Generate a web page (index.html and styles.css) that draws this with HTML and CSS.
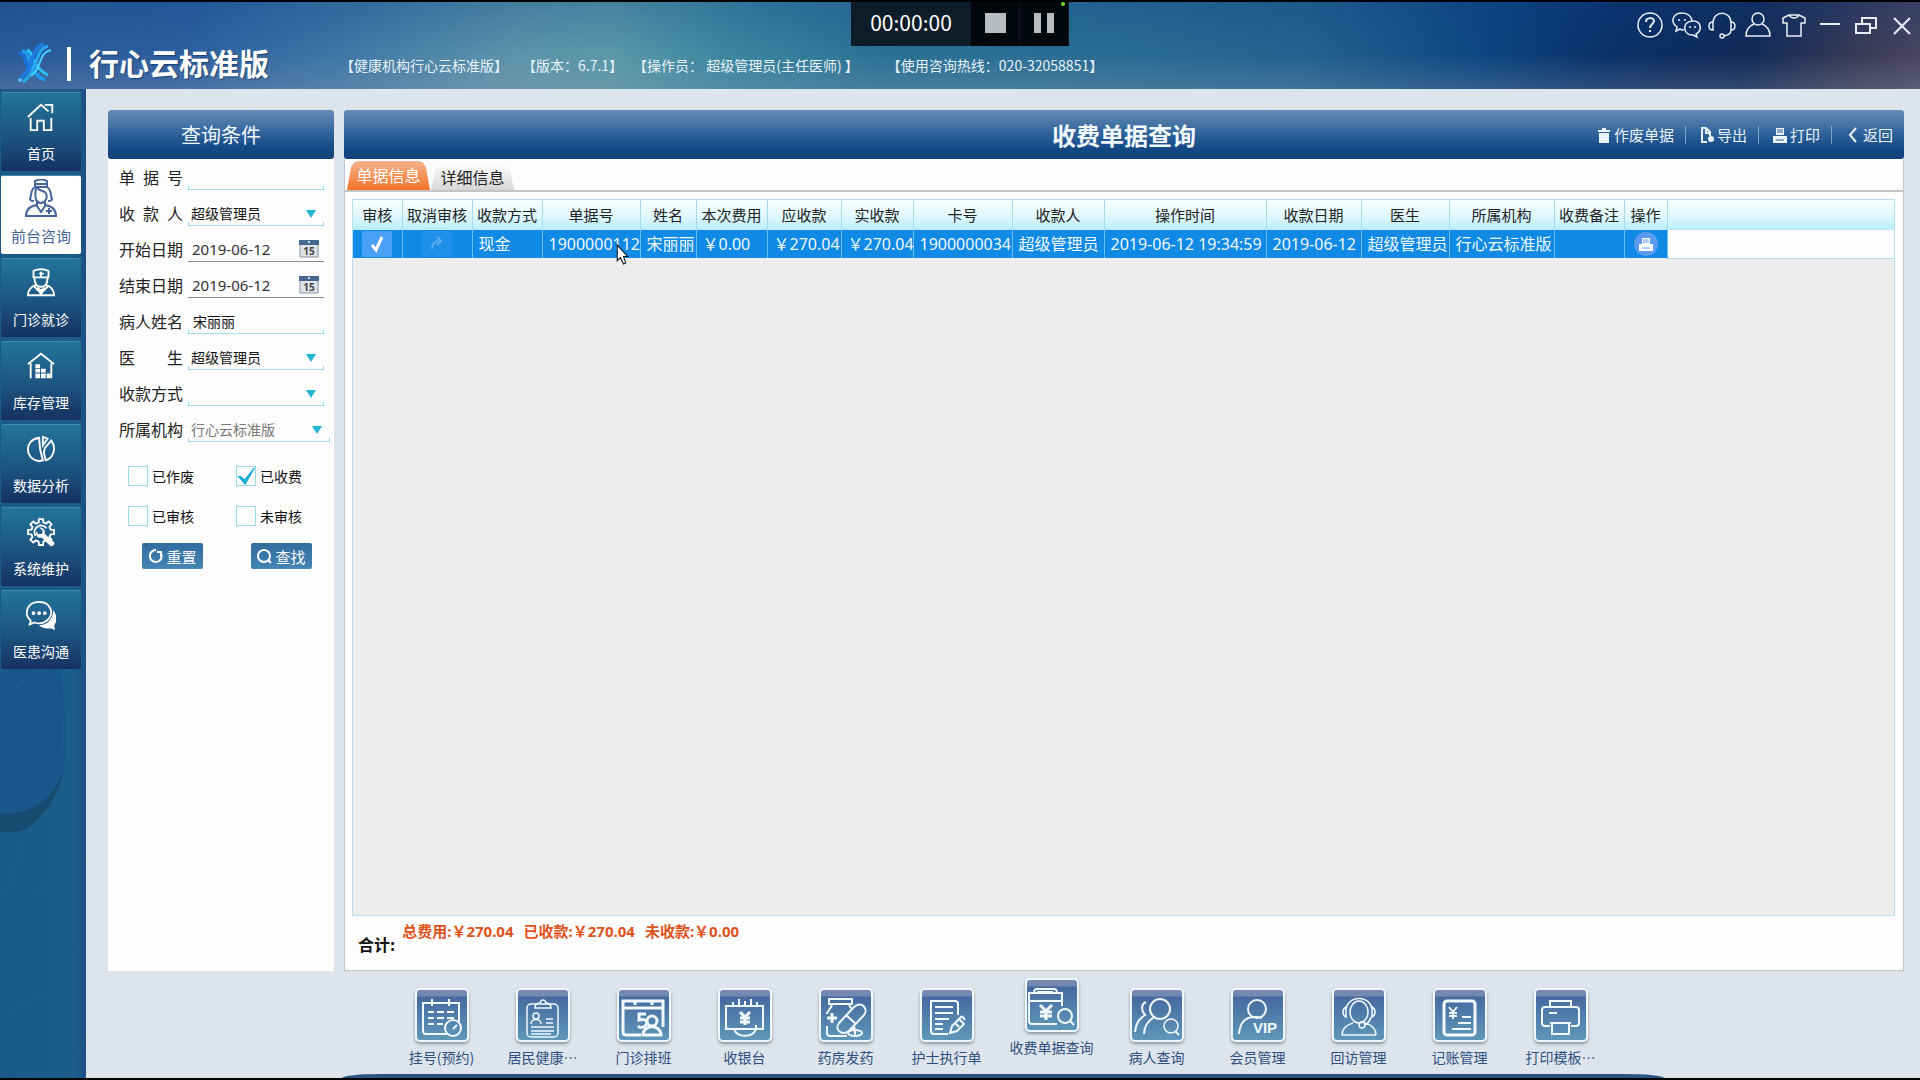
FILE: index.html
```html
<!DOCTYPE html>
<html lang="zh-CN">
<head>
    <meta charset="UTF-8">
    <meta name="viewport" content="width=device-width, initial-scale=1.0">
    <title>收费单据查询</title>
    <link rel="stylesheet" href="styles.css">
</head>
<body>
    <header class="topbar">
        <svg class="logo" viewBox="0 0 36 42" fill="none">
            <path d="M2 11c7 1 6 7 9 13 1 2 2 3 4 4" stroke="#1b6fd6" stroke-width="3"/>
            <path d="M6 9c7 1 6 8 9 14s6 12 14 15" stroke="#1f97ea" stroke-width="4"/>
            <path d="M11 8c6 2 5 8 8 13s6 9 13 12" stroke="#2cc0f8" stroke-width="3"/>
            <path d="M28 2c-9 3-9 9-12 16S12 32 4 36" stroke="#1c7be0" stroke-width="4"/>
            <path d="M32 4c-9 3-9 9-12 16S15 34 7 40" stroke="#27a9f2" stroke-width="3"/>
            <path d="M35 8c-8 2-9 7-11 12-2 6-5 11-9 14" stroke="#45d0fc" stroke-width="2"/>
            <circle cx="4" cy="38" r="2" fill="#4fb4f5"/>
        </svg>
        <span class="divider"></span>
        <h1 class="brand">行心云标准版</h1>
        <div class="info">
            <span>【健康机构行心云标准版】</span>
            <span class="info-version">【版本：6.7.1】</span>
            <span class="info-user">【操作员： 超级管理员(主任医师) 】</span>
            <span class="info-phone">【使用咨询热线：020-32058851】</span>
        </div>
        <div class="window-tools">
            <button aria-label="帮助"><svg viewBox="0 0 30 30"><circle cx="15" cy="15" r="12"/><path class="bold" d="M11 12c0-5 8-5 8-1 0 3-4 3-4 7M15 20v2"/></svg></button>
            <button aria-label="微信"><svg viewBox="0 0 30 30"><path d="M13 20c-2 0-3 0-4-1l-4 2 1-4C-2 11 3 3 11 3c6 0 10 4 10 8"/><path d="M22 11c9 0 9 10 3 13l1 3-4-2c-10 1-12-14 0-14z"/><path d="M8 9v2M14 9v2M19 16v2M24 16v2"/></svg></button>
            <button aria-label="客服"><svg viewBox="0 0 30 30"><path d="M6 13C6 0 24 0 24 13M6 12c-3 0-4 2-4 4s1 4 4 4zM24 12c3 0 4 2 4 4s-1 4-4 4zM24 20c0 4-3 5-7 6"/><circle cx="15" cy="26" r="2"/></svg></button>
            <button aria-label="用户"><svg viewBox="0 0 30 30"><circle cx="15" cy="9" r="6"/><path d="M11 14c-5 2-8 6-8 12h24c0-6-3-10-8-12"/></svg></button>
            <button aria-label="换肤"><svg viewBox="0 0 30 30"><path d="M10 5L4 8v5h4v13h14V13h4V8l-6-3c-2 4-8 4-10 0zM10 5h10"/></svg></button>
            <button aria-label="最小化"><svg class="bold" viewBox="0 0 30 30"><path d="M5 14h20"/></svg></button>
            <button aria-label="还原"><svg class="bold" viewBox="0 0 30 30"><path d="M5 14h14v9H5zM11 14V8h14v10h-6"/></svg></button>
            <button aria-label="关闭"><svg class="bold" viewBox="0 0 30 30"><path d="M7 8l16 16M23 8L7 24"/></svg></button>
        </div>
        <div class="recorder">
            <span class="recorder-time">00:00:00</span>
            <button aria-label="停止"><svg viewBox="0 0 48 44"><path d="M14 11h21v20H14z"/></svg></button>
            <button aria-label="暂停"><svg viewBox="0 0 48 44"><path d="M14 11h7v20h-7zM27 11h7v20h-7z"/></svg></button>
            <i class="recorder-dot"></i>
        </div>
    </header>

    <div class="layout">
        <aside class="sidebar">
            <nav class="menu">
                <a href="#"><svg viewBox="0 0 32 32"><path d="M2 16L16 3l8 7M20 3h8v9M5 17v13h7V20h7v10h8V17"/></svg>首页</a>
                <a href="#" class="active"><svg viewBox="0 0 32 38"><path d="M10 8V2c4-2 8-2 12 0v6M10 5h12M9 22c-3 0-4-1-4-2 2-4 0-9 5-12h12c5 3 3 8 5 12 0 1-1 2-4 2M11 9c-2 12 1 15 5 15s8-6 4-11c-4-1-6-2-8-4M12 23v4l4 6 4-6v-4M12 26c-7 1-11 4-11 11h30c0-7-4-10-11-11M21 32h6M24 29v6"/></svg>前台咨询</a>
                <a href="#"><svg viewBox="0 0 32 32"><path d="M8 10V3c5-2 11-2 16 0v7zM16 4v5M14 6h5M9 10c0 8 3 10 7 10s7-2 7-10M11 18c-6 2-9 5-9 11h28c0-6-3-9-9-11M9 20l8 8M23 20l-8 8M12 21l4 3 4-3"/></svg>门诊就诊</a>
                <a href="#"><svg viewBox="0 0 32 32"><path d="M2 14L16 3l14 11M5 13v16M27 13v16"/><path class="solid" d="M10 14h5v4h-5zM10 19h5v4h-5zM16 19h5v4h-5zM10 24h5v5h-5zM16 24h5v5h-5zM22 24h4v5h-4z"/></svg>库存管理</a>
                <a href="#"><svg viewBox="0 0 32 32"><path d="M14 4C-2 6-2 27 14 29l4-1-3-12zM20 15l7-8c6 8 2 19-6 21l-2-8zM18 3v9l5-7z"/></svg>数据分析</a>
                <a href="#"><svg viewBox="0 0 32 32"><path d="M13.5 5.8L13.8 2.2h4.4l.3 3.6L21.4 7l2.8-2.3 3.1 3.1L25 10.6l1.2 2.9 3.6.3v4.4l-3.6.3L25 21.4l2.3 2.8-3.1 3.1-2.8-2.3-2.9 1.2-.3 3.6h-4.4l-.3-3.6L10.6 25l-2.8 2.3-3.1-3.1L7 21.4l-1.2-2.9-3.6-.3v-4.4l3.6-.3L7 10.6 4.7 7.8l3.1-3.1L10.6 7z"/><path d="M22 12C16 5 6 12 10 20"/><path class="solid" d="M14 11l4 4-1 3h-4l-2-3c-1 6 2 8 6 7l9 9c3 1 5-2 4-4l-10-9c1-4-2-7-6-7z"/></svg>系统维护</a>
                <a href="#"><svg viewBox="0 0 32 32"><path class="solid" d="M29 11c5 6 4 13 1 16l1 5-5-2c-5 1-9 0-12-3 8 0 15-6 15-16z"/><path d="M5 22C-3 15 1 2 14 2s17 14 8 20c-4 3-8 4-13 2l-5 2z"/><path class="dots" d="M8 14h0M14 14h0M20 14h0"/></svg>医患沟通</a>
            </nav>
            <svg class="sidebar-art" viewBox="0 0 86 406" preserveAspectRatio="xMinYMin slice">
                <path d="M60 0c6 40 8 90 1 112-14 32-35 40-61 38V0z" fill="#18568b"/>
                <path d="M63 86c0 18-5 30-13 38-14 15-28 20-50 19v18c16 3 28 0 38-13 14-12 24-32 25-62z" fill="#184b70"/>
                <path d="M40 0c24 24 27 58 20 95M0 32L38 0" stroke="#235f8c" fill="none"/>
                <path d="M86 190c-20 20-30 22-50 30M26 170L0 230M80 270c-10 60-50 50-80 80M86 360l-16 46" stroke="#235f8b" fill="none"/>
            </svg>
        </aside>

        <main class="content">
            <div class="panels">
                <section class="search-panel">
                    <h2 class="panel-title">查询条件</h2>
                    <form class="search-form">
                        <div class="row"><label for="billNo">单据号</label><div class="field"><input id="billNo" type="text"></div></div>
                        <div class="row"><label for="payee">收款人</label><div class="field drop"><select id="payee"><option>超级管理员</option></select></div></div>
                        <div class="row"><label for="startDate">开始日期</label><div class="field date"><input id="startDate" type="text" value="2019-06-12"><svg viewBox="0 0 20 20"><path fill="#dde2e8" stroke="#8a94a3" d="M1 2h18v16H1z"/><path fill="#46678f" d="M0 1h20v5H0z"/><circle cx="10" cy="3" r="1" fill="#fff"/><text x="10" y="16">15</text></svg></div></div>
                        <div class="row"><label for="endDate">结束日期</label><div class="field date"><input id="endDate" type="text" value="2019-06-12"><svg viewBox="0 0 20 20"><path fill="#dde2e8" stroke="#8a94a3" d="M1 2h18v16H1z"/><path fill="#46678f" d="M0 1h20v5H0z"/><circle cx="10" cy="3" r="1" fill="#fff"/><text x="10" y="16">15</text></svg></div></div>
                        <div class="row"><label for="patient">病人姓名</label><div class="field"><input id="patient" type="text" value="宋丽丽"></div></div>
                        <div class="row"><label for="doctor">医生</label><div class="field drop"><select id="doctor"><option>超级管理员</option></select></div></div>
                        <div class="row"><label for="payType">收款方式</label><div class="field drop"><select id="payType"><option></option></select></div></div>
                        <div class="row wide"><label for="org">所属机构</label><div class="field drop muted"><select id="org"><option>行心云标准版</option></select></div></div>
                        <div class="checks">
                            <label><input type="checkbox">已作废</label>
                            <label><input type="checkbox" checked>已收费</label>
                            <label><input type="checkbox">已审核</label>
                            <label><input type="checkbox">未审核</label>
                        </div>
                        <div class="actions">
                            <button type="reset"><svg viewBox="0 0 16 16"><path d="M8 2a6 6 0 1 0 5 3M13 9V4H9"/></svg>重置</button>
                            <button type="button"><svg viewBox="0 0 16 16"><circle cx="7" cy="8" r="6"/><path d="M11 12l3 3"/></svg>查找</button>
                        </div>
                    </form>
                </section>

                <section class="bill-panel">
                    <div class="bill-title">
                        <h2>收费单据查询</h2>
                        <div class="tools">
                            <button><svg viewBox="0 0 14 18"><path d="M1 4h12v2H1zM5 2h4v2H5zM2 7h10v10H2z"/></svg>作废单据</button>
                            <button><svg class="line" viewBox="0 0 14 18"><path d="M7 16H2V2h4l4 4v4M6 2v5h4"/><circle class="dot" cx="11" cy="13" r="3"/></svg>导出</button>
                            <button><svg viewBox="0 0 14 18"><path d="M3 2h8v7H3zM0 10h14v7H0z"/><path d="M4 4h6M4 6h6M3 14h8" stroke="#2a5c94"/></svg>打印</button>
                            <button><svg class="line" viewBox="0 0 14 18"><path d="M10 2L4 9l6 7"/></svg>返回</button>
                        </div>
                    </div>
                    <div class="bill-body">
                        <div class="tabs">
                            <button class="tab active">单据信息</button>
                            <button class="tab">详细信息</button>
                        </div>
                        <div class="grid">
                            <table>
                                <colgroup>
                                    <col class="w49"><col class="w70"><col class="w70"><col class="w98"><col class="w56"><col class="w71"><col class="w74"><col class="w72"><col class="w99"><col class="w92"><col class="w162"><col class="w95"><col class="w88"><col class="w105"><col class="w70"><col class="w43"><col>
                                </colgroup>
                                <thead>
                                    <tr>
                                        <th>审核</th><th>取消审核</th><th>收款方式</th><th>单据号</th><th>姓名</th><th>本次费用</th><th>应收款</th><th>实收款</th><th>卡号</th><th>收款人</th><th>操作时间</th><th>收款日期</th><th>医生</th><th>所属机构</th><th>收费备注</th><th>操作</th><th></th>
                                    </tr>
                                </thead>
                                <tbody>
                                    <tr>
                                        <td class="op"><button class="check" aria-label="审核"><svg viewBox="0 0 30 26"><path d="M10 14l4 5 6-13" fill="none" stroke="#fff" stroke-width="3"/></svg></button></td>
                                        <td class="op"><button class="undo" aria-label="取消审核"><svg viewBox="0 0 30 26"><path d="M10 18c0-6 3-8 8-8M15 6l4 4-4 4" fill="none" stroke="#5cabef" stroke-width="2"/></svg></button></td>
                                        <td>现金</td>
                                        <td>1900000112</td>
                                        <td>宋丽丽</td>
                                        <td>￥0.00</td>
                                        <td>￥270.04</td>
                                        <td>￥270.04</td>
                                        <td>1900000034</td>
                                        <td>超级管理员</td>
                                        <td>2019-06-12 19:34:59</td>
                                        <td>2019-06-12</td>
                                        <td>超级管理员</td>
                                        <td>行心云标准版</td>
                                        <td></td>
                                        <td class="op"><button class="print" aria-label="打印"><svg viewBox="0 0 24 24"><path d="M8 6h8v6H8zM5 12h14v7H5z" fill="#fff"/><path d="M9 8h6M9 10h6M8 16h8" stroke="#5b9cf0"/></svg></button></td>
                                        <td class="blank"></td>
                                    </tr>
                                </tbody>
                            </table>
                        </div>
                        <div class="total">
                            <strong>合计:</strong>
                            <p><span>总费用:￥270.04</span><span>已收款:￥270.04</span><span>未收款:￥0.00</span></p>
                        </div>
                    </div>
                </section>
            </div>

            <nav class="dock">
                <a href="#"><svg viewBox="0 0 50 50"><path d="M30 44H9c-2 0-3-1-3-3V13h36v19M15 9v7M32 9v7"/><path d="M11 22h6M20 22h7M30 22h7M11 28h6M20 28h7M30 28h7M11 34h6M20 34h6"/><circle cx="36" cy="38" r="8"/><path d="M36 39l4-4"/></svg>挂号(预约)</a>
                <a href="#"><svg class="thin" viewBox="0 0 50 50"><rect x="9" y="14" width="31" height="33" rx="4"/><path d="M17 18c0-4 2-5 5-5 1-4 5-4 6 0 3 0 5 1 5 5z"/><circle cx="18" cy="26" r="3"/><path d="M13 34c0-6 10-6 10 0M28 29h7M28 33h7M13 37h23M13 41h23M13 44h20"/></svg>居民健康…</a>
                <a href="#"><svg class="thick" viewBox="0 0 50 50"><path d="M22 45H7c-2 0-3-1-3-3V11h40v26M4 18h40M16 11v4M33 11v4"/><path d="M27 24h-7v6c7-2 9 2 7 5s-6 3-8 1"/><circle cx="33" cy="31" r="5"/><path d="M24 45c0-11 18-11 18 0z"/></svg>门诊排班</a>
                <a href="#"><svg viewBox="0 0 50 50"><path d="M6 16h37v23H6zM13 16v-4M19 16V9M25 16v-5M31 16V9M37 16v-4M14 39c3 9 19 9 22 0v-4"/><path class="heavy" d="M20 22l5 5 5-5M25 27v8M20 28h10M20 32h10"/></svg>收银台</a>
                <a href="#"><svg viewBox="0 0 50 50"><path d="M8 9h23v5H8zM11 14c0 5-5 6-5 10M28 14c0 2 2 4 3 5M6 36v7c0 2 1 3 3 3h17"/><path class="heavy" d="M6 28h10M11 23v10"/><path d="M18 33l15-16c7-6 15 1 10 8L28 41c-7 5-15-1-10-8zM25 25l10 9M34 37l-2 3"/><ellipse cx="34" cy="43" rx="7" ry="3"/><path d="M34 40v6"/></svg>药房发药</a>
                <a href="#"><svg viewBox="0 0 50 50"><path d="M26 44H12c-2 0-3-1-3-3V11h24c2 0 3 1 3 3v11M13 17h18M13 23h18M13 29h14M13 34h8M13 39h8"/><path d="M28 43l2-7 7-7 5 5-7 7zM37 29l3-3M40 26l3 4M33 33l4 4"/></svg>护士执行单</a>
                <a href="#" class="active"><svg viewBox="0 0 50 50"><path d="M30 44H5c-2 0-3-1-3-3V13h33v13M2 21h33M7 13c0-3 1-4 3-4h17c2 0 3 1 3 4M10 12h16"/><path class="heavy" d="M13 25l6 6 6-6M19 31v9M13 32h12M13 36h12"/><circle cx="38" cy="36" r="7"/><path d="M43 41l4 4"/></svg>收费单据查询</a>
                <a href="#"><svg viewBox="0 0 50 50"><circle cx="28" cy="19" r="10"/><path d="M12 44c0-8 4-13 10-17M14 12c-5 2-5 9-1 13-6 4-9 8-10 17"/><circle class="fine" cx="39" cy="36" r="7"/><path d="M43 41l4 4"/></svg>病人查询</a>
                <a href="#"><svg viewBox="0 0 50 50"><circle cx="24" cy="19" r="9"/><path d="M6 44c1-12 7-18 18-17 2 0 3 0 5 1"/><text x="32" y="43">VIP</text></svg>会员管理</a>
                <a href="#"><svg class="thin" viewBox="0 0 50 50"><ellipse cx="25" cy="22" rx="9" ry="11"/><path d="M12 22C11 4 39 4 38 22M12 17c-4 2-4 8 0 10zM38 17c4 2 4 8 0 10zM37 27c-1 4-4 7-7 8M8 45c0-7 4-10 11-12M42 45c0-7-4-10-11-12M8 45h34"/><circle cx="28" cy="35" r="3"/></svg>回访管理</a>
                <a href="#"><svg class="thick" viewBox="0 0 50 50"><rect x="9" y="11" width="31" height="34" rx="3"/><path class="mid" d="M14 17l4 5 4-5M18 22v7M14 23h8M14 26h8M27 27h9M23 33h13M17 39h19"/></svg>记账管理</a>
                <a href="#"><svg viewBox="0 0 50 50"><path d="M14 17v-6h21v6M14 36H9c-2 0-3-1-3-3V20c0-2 1-3 3-3h31c2 0 3 1 3 3v13c0 2-1 3-3 3h-5M14 33h21M16 33v11h17V33M13 23h8"/></svg>打印模板…</a>
            </nav>
            <div class="dock-edge"></div>
        </main>
    </div>

    <svg class="cursor" viewBox="0 0 12 20"><path d="M1 1v15l3-3 3 6 2-1-2-6h4z" fill="#fff" stroke="#111"/></svg>
</body>
</html>
```

FILE: styles.css
```css
* {
    box-sizing: border-box;
}
body {
    margin: 0;
    min-height: 100vh;
    display: flex;
    flex-direction: column;
    border-top: 2px solid #000;
    border-bottom: 2px solid #000;
    background-color: #dde4ec;
    font-family: "Noto Sans CJK SC", sans-serif;
    font-size: 14px;
    color: #222;
}
h1, h2, p {
    margin: 0;
}
a {
    text-decoration: none;
}
button {
    font-family: inherit;
    padding: 0;
    border: none;
    background: none;
    cursor: pointer;
}
svg {
    display: block;
}

/* top bar */
.topbar {
    position: relative;
    display: flex;
    align-items: flex-start;
    height: 87px;
    padding-left: 16px;
    color: #fff;
    background:
        linear-gradient(180deg, rgba(10, 60, 130, 0.25), rgba(255, 255, 255, 0) 60%, rgba(150, 160, 180, 0.25)),
        linear-gradient(100deg, #2a5a96 0%, #2d5f9f 10%, #3f77a6 18%, #5c93a9 27%, #5a98a8 32%, #3c86a0 38%, #2b7195 46%, #2a6c93 58%, #24618f 68%, #0e4680 77%, #0a2f66 84%, #112a55 91%, #3d3b57 97%, #494560 100%);
}
.logo {
    width: 36px;
    height: 42px;
    margin-top: 40px;
}
.divider {
    width: 4px;
    height: 34px;
    margin: 45px 18px 0 15px;
    background-color: #fff;
}
.brand {
    margin-top: 38px;
    font-size: 30px;
    line-height: 44px;
    font-weight: 700;
    text-shadow: 1px 1px 1px #1c3f73;
}
.info {
    display: flex;
    margin: 53px 0 0 71px;
    line-height: 20px;
    white-space: nowrap;
    color: #e6f2f8;
}
.info-version {
    margin-left: 14px;
}
.info-user {
    margin-left: 10px;
}
.info-phone {
    margin-left: 28px;
}
.window-tools {
    display: flex;
    gap: 6px;
    margin: 8px 3px 0 auto;
}
.window-tools svg {
    width: 30px;
    height: 30px;
    fill: none;
    stroke: #e8eef6;
    stroke-width: 1.5;
}
.window-tools .bold {
    stroke-width: 2;
}
.recorder {
    position: absolute;
    top: 0;
    left: 50%;
    display: flex;
    width: 218px;
    height: 44px;
    margin-left: -109px;
    background-color: #0c1c28;
}
.recorder-time {
    flex: 1;
    font-size: 21px;
    line-height: 40px;
    text-align: center;
}
.recorder button {
    width: 49px;
    background-color: #03060a;
    border-right: 1px solid #10171e;
}
.recorder svg {
    fill: #b9bcc0;
}
.recorder-dot {
    position: absolute;
    top: 0;
    right: 4px;
    width: 4px;
    height: 4px;
    border-radius: 2px;
    background-color: #6fdc2c;
}

.layout {
    flex: 1;
    display: flex;
}

/* left menu */
.sidebar {
    width: 86px;
    display: flex;
    flex-direction: column;
    background: linear-gradient(90deg, #1a5a88, #1b5e8a 85%, #1d4f86);
}
.menu {
    display: flex;
    flex-direction: column;
    gap: 4px;
    padding: 3px 5px 0 1px;
}
.menu a {
    display: flex;
    flex-direction: column;
    align-items: center;
    justify-content: space-between;
    height: 79px;
    padding: 9px 0 8px;
    border-top: 1px solid #4389a8;
    border-radius: 2px;
    background: linear-gradient(#23749a, #1d5480 55%, #163261);
    color: #fff;
    line-height: 20px;
}
.menu .active {
    padding-top: 3px;
    background: #fff;
    color: #46659b;
    font-size: 15px;
}
.menu svg {
    width: 30px;
    height: 30px;
    fill: none;
    stroke: currentColor;
    stroke-width: 2;
}
.menu .active svg {
    width: 34px;
    height: 38px;
}
.menu .solid {
    fill: currentColor;
    stroke: none;
}
.menu .dots {
    stroke-width: 4;
    stroke-linecap: round;
}
.sidebar-art {
    flex: 1;
    width: 86px;
    height: 0;
}

/* main area */
.content {
    flex: 1;
    display: flex;
    flex-direction: column;
    min-width: 0;
}
.panels {
    flex: 1;
    display: flex;
    gap: 10px;
    padding: 21px 16px 0 22px;
}
.search-panel {
    width: 226px;
    background-color: #fdfdfd;
}
.panel-title,
.bill-title {
    height: 49px;
    border-radius: 3px;
    background: linear-gradient(#688db3, #32659c 45%, #124884 80%, #154377);
    color: #f2f8ff;
}
.panel-title {
    font-size: 20px;
    line-height: 49px;
    font-weight: 400;
    text-align: center;
}
.row {
    display: flex;
    align-items: center;
    gap: 5px;
    height: 36px;
    padding: 0 10px 0 11px;
}
.row.wide {
    padding-right: 4px;
}
.row label {
    width: 64px;
    font-size: 16px;
    text-align-last: justify;
}
.field {
    position: relative;
    flex: 1;
    display: flex;
    align-items: center;
    height: 26px;
    background:
        linear-gradient(#8fd3e6, #8fd3e6) left bottom / 1px 4px no-repeat,
        linear-gradient(#8fd3e6, #8fd3e6) right bottom / 1px 4px no-repeat,
        linear-gradient(#a5dbea, #a5dbea) left bottom / 100% 1px no-repeat;
}
.field input,
.field select {
    width: 100%;
    height: 24px;
    padding: 0 0 0 5px;
    border: none;
    background: none;
    appearance: none;
    font-family: inherit;
    font-size: 14px;
    color: #111;
}
.field select {
    padding-left: 3px;
}
.drop::after {
    content: "";
    position: absolute;
    right: 8px;
    top: 10px;
    border: 5px solid transparent;
    border-top: 8px solid #22b5cf;
    border-bottom: none;
    pointer-events: none;
}
.field.muted select {
    color: #777;
}
.field.date {
    background: none;
    border-bottom: 1px solid #8c8c8c;
}
.field.date input {
    padding-left: 4px;
    font-family: "Noto Sans", sans-serif;
    font-size: 15px;
    color: #333;
}
.field.date svg {
    flex: none;
    width: 20px;
    height: 20px;
    margin-right: 5px;
}
.field.date text {
    font-family: "Noto Sans", sans-serif;
    font-size: 10px;
    font-weight: 700;
    text-anchor: middle;
    fill: #444;
}
.checks {
    display: grid;
    grid-template-columns: 108px 1fr;
    gap: 20px 0;
    padding: 19px 0 0 20px;
}
.checks label {
    display: flex;
    align-items: center;
    gap: 4px;
    height: 20px;
    color: #111;
}
.checks input {
    position: relative;
    width: 20px;
    height: 20px;
    margin: 0;
    border: 1px solid #9bd9ea;
    appearance: none;
}
.checks input:checked::after {
    content: "";
    position: absolute;
    inset: 0;
    background-color: #1aa9d6;
    clip-path: polygon(2% 52%, 22% 50%, 42% 68%, 95% 2%, 100% 6%, 46% 100%);
}
.actions {
    display: flex;
    gap: 48px;
    padding: 17px 0 0 34px;
}
.actions button {
    display: flex;
    align-items: center;
    justify-content: center;
    gap: 2px;
    width: 61px;
    height: 26px;
    border-radius: 2px;
    background: linear-gradient(#326c9f, #4486b3);
    color: #fff;
    font-size: 15px;
}
.actions svg {
    width: 16px;
    height: 16px;
    fill: none;
    stroke: #fff;
    stroke-width: 2;
}

/* bill list */
.bill-panel {
    flex: 1;
    display: flex;
    flex-direction: column;
    min-width: 0;
}
.bill-title {
    display: grid;
    grid-template-columns: 1fr auto 1fr;
    align-items: center;
}
.bill-title h2 {
    grid-column: 2;
    font-size: 24px;
    line-height: 30px;
}
.tools {
    display: flex;
    justify-content: flex-end;
    line-height: 16px;
}
.tools button {
    display: flex;
    align-items: center;
    gap: 3px;
    padding: 0 11px 0 14px;
    color: #eaf3fb;
    font-size: 15px;
    line-height: 16px;
}
.tools button + button {
    border-left: 1px solid #7fa3c6;
}
.tools svg {
    width: 14px;
    height: 18px;
    fill: #eaf3fb;
}
.tools .line {
    fill: none;
    stroke: #eaf3fb;
    stroke-width: 2;
}
.tools .dot {
    fill: #eaf3fb;
    stroke: none;
}
.bill-body {
    flex: 1;
    display: flex;
    flex-direction: column;
    border: 1px solid #c3c7cd;
    border-top: none;
    background-color: #fdfdfd;
}
.tabs {
    display: flex;
    align-items: flex-end;
    gap: 1px;
    height: 33px;
    padding-left: 2px;
    border-bottom: 2px solid #c4c4c4;
}
.tab {
    width: 83px;
    height: 26px;
    font-size: 16px;
    line-height: 26px;
    color: #222;
    background: linear-gradient(#fdfdfd, #d6d6d6);
    clip-path: polygon(0 100%, 5% 20%, 9% 4%, 14% 0, 86% 0, 91% 4%, 95% 20%, 100% 100%);
}
.tab.active {
    height: 29px;
    line-height: 29px;
    color: #fff;
    background: linear-gradient(#f3b48c, #f4732a);
}
.grid {
    flex: 1;
    margin: 7px 8px 0 7px;
    border: 1px solid #b5e0ec;
    background-color: #ededed;
}
.grid table {
    width: 100%;
    table-layout: fixed;
    border-collapse: collapse;
}
.w43 { width: 43px; }
.w49 { width: 49px; }
.w56 { width: 56px; }
.w70 { width: 70px; }
.w71 { width: 71px; }
.w72 { width: 72px; }
.w74 { width: 74px; }
.w88 { width: 88px; }
.w92 { width: 92px; }
.w95 { width: 95px; }
.w98 { width: 98px; }
.w99 { width: 99px; }
.w105 { width: 105px; }
.w162 { width: 162px; }
.grid th {
    height: 30px;
    padding: 0;
    border-right: 1px solid #a5dbea;
    background: linear-gradient(#f6fdff, #e2f8fe 50%, #b8edfc);
    font-size: 15px;
    line-height: 20px;
    font-weight: 400;
    white-space: nowrap;
}
.grid td {
    height: 28px;
    padding: 0 0 0 6px;
    border-right: 1px solid #6dbcf3;
    background-color: #118ae6;
    color: #eef8ff;
    font-family: "Noto Sans", "Noto Sans CJK SC", sans-serif;
    font-size: 16px;
    line-height: 20px;
    white-space: nowrap;
}
.grid th:last-child,
.grid td:last-child {
    border-right: none;
}
.grid .op {
    padding: 0;
}
.grid .blank {
    background-color: #fdfdfd;
    border-bottom: 1px solid #b5dfe6;
}
.op button {
    display: block;
    width: 30px;
    height: 26px;
    margin: 0 auto;
    border-radius: 2px;
}
.op .check {
    background-color: #4a9ff7;
}
.op .undo {
    background-color: #1f90ea;
}
.op .print {
    width: 24px;
    height: 24px;
    border-radius: 12px;
    background-color: #5b9cf0;
}
.total {
    display: flex;
    gap: 7px;
    height: 54px;
    padding-left: 13px;
    font-size: 16px;
}
.total strong {
    padding-top: 16px;
    color: #111;
}
.total p {
    display: flex;
    gap: 10px;
    padding-top: 3px;
    font-family: "Noto Sans", "Noto Sans CJK SC", sans-serif;
    font-size: 15px;
    line-height: 24px;
    font-weight: 700;
    color: #e0521c;
}

/* bottom shortcuts */
.dock {
    display: flex;
    justify-content: center;
    padding: 17px 4px 6px 0;
}
.dock a {
    display: flex;
    flex-direction: column;
    align-items: center;
    gap: 4px;
    width: 101px;
    color: #2f507f;
    line-height: 22px;
}
.dock .active {
    width: 109px;
    margin: -10px 0 10px;
}
.dock svg {
    width: 54px;
    height: 54px;
    border: 2px solid #eef7fd;
    border-radius: 5px;
    background: linear-gradient(#7488b2 6px, #466a9f 7px, #5f97b8);
    box-shadow: 0 2px 3px rgba(60, 80, 100, 0.5);
    fill: none;
    stroke: #f0f9ff;
    stroke-width: 2;
}
.dock .thin,
.dock .fine {
    stroke-width: 1.5;
}
.dock .thick,
.dock .heavy {
    stroke-width: 3;
}
.dock .mid {
    stroke-width: 2;
}
.dock text {
    font-family: "Liberation Sans", sans-serif;
    font-size: 15px;
    font-weight: 700;
    text-anchor: middle;
    fill: #f0f9ff;
    stroke: none;
}
.dock-edge {
    height: 4px;
    margin: 0 256px;
    border-radius: 40px 40px 0 0 / 4px 4px 0 0;
    background-color: #2b5580;
}

.cursor {
    position: absolute;
    left: 616px;
    top: 244px;
    width: 13px;
    height: 21px;
}
```
